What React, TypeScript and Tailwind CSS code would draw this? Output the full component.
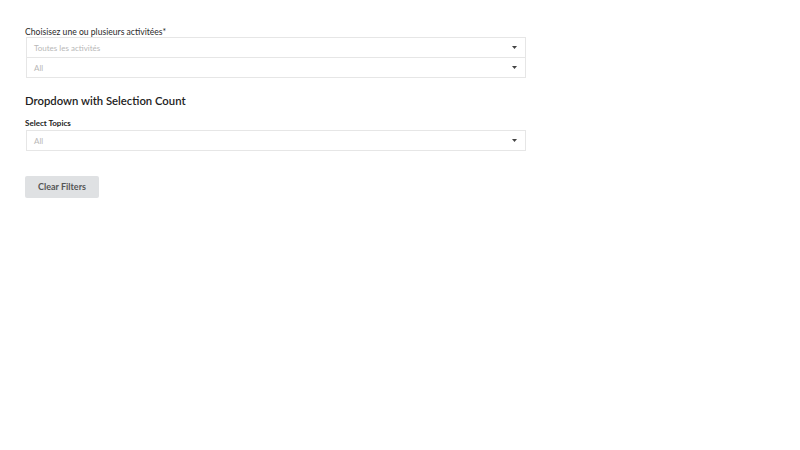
import React from "react";

function Caret() {
  return (
    <svg width="5" height="3" viewBox="0 0 5 3" className="shrink-0">
      <path d="M0 0 L5 0 L2.5 3 Z" fill="#444" />
    </svg>
  );
}

function Select({ placeholder, className = "" }: { placeholder: string; className?: string }) {
  return (
    <div
      className={`flex items-center justify-between h-[21px] w-[500px] ml-px border border-[#e6e6e6] bg-white pl-[7px] pr-[8px] ${className}`}
    >
      <span className="text-[8px] text-[#b8b8b8]">{placeholder}</span>
      <Caret />
    </div>
  );
}

export default function App() {
  return (
    <div
      className="w-[800px] h-[450px] bg-white pl-[25px] pt-[25px] text-[#222]"
      style={{ fontFamily: "Lato, 'Open Sans', sans-serif" }}
    >
      <div className="text-[8.6px] leading-[12px] pt-px text-[#2a2a2a]">Choisisez une ou plusieurs activitées*</div>
      <Select placeholder="Toutes les activités" className="-mt-px" />
      <Select placeholder="All" className="-mt-px" />
      <div className="mt-[15px] text-[11.3px] font-semibold leading-[16px] text-[#222]">Dropdown with Selection Count</div>
      <div className="mt-[9px] text-[8px] font-bold leading-[11px] text-[#222]">Select Topics</div>
      <Select placeholder="All" className="mt-px" />
      <button className="mt-[25px] w-[74px] h-[22px] bg-[#dfe1e3] rounded-[2px] text-[9px] font-bold text-[#555]">
        Clear Filters
      </button>
    </div>
  );
}
